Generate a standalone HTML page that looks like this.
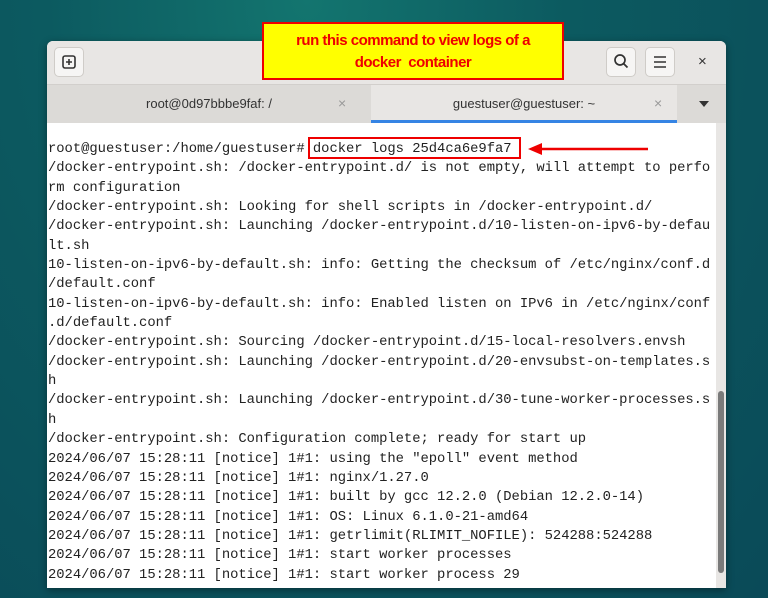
<!DOCTYPE html>
<html><head><style>
body{margin:0;width:768px;height:598px;overflow:hidden;background:radial-gradient(ellipse at 40% 0%,#13756f 0%,#0c5a60 40%,#0a4a58 100%);font-family:"Liberation Sans",sans-serif;position:relative}
.win{position:absolute;left:47px;top:41px;width:679px;height:547px;background:#fff;border-radius:6px 6px 0 0;overflow:hidden;box-shadow:0 2px 8px rgba(0,0,0,.4)}
.hdr{height:43px;background:#e8e6e4;border-bottom:1px solid #d2cfcc;position:relative}
.btn{position:absolute;top:6px;width:30px;height:30px;border:1px solid #cfccc8;border-radius:5px;background:#f6f5f4;box-sizing:border-box}
.tabs{height:38px;background:#dcdad7;position:relative;font-size:13px;color:#333}
.tab{position:absolute;top:0;height:38px;line-height:38px;text-align:center}
.x{position:absolute;top:0;color:#999;font-size:14px}
.term{position:absolute;top:84px;left:1px;width:669px;font-family:"Liberation Mono",monospace;font-size:13.85px;line-height:19.35px;color:#222;white-space:pre;padding-top:15px;letter-spacing:-0.03px}
.sb{position:absolute;right:0;top:82px;width:10px;bottom:0;background:#e8e6e4}
.th{position:absolute;left:2px;width:6px;top:268px;height:182px;background:#7a7a7a;border-radius:3px}
.note{position:absolute;left:262px;top:22px;width:302px;height:58px;background:#ffff00;border:2px solid #e00;box-sizing:border-box;color:#e00;font-weight:bold;font-size:15px;text-align:center;line-height:22px;padding-top:6px;letter-spacing:-.5px}
.box{position:absolute;left:308px;top:137px;width:213px;height:22px;border:2px solid #e00;box-sizing:border-box}
</style></head><body>
<div class="win">
<div class="hdr">
<div class="btn" style="left:7px"><svg width="28" height="28" viewBox="0 0 28 28"><rect x="8" y="8" width="12" height="12" rx="2" fill="none" stroke="#333" stroke-width="1.6"/><path d="M14 11v6M11 14h6" stroke="#333" stroke-width="1.6"/></svg></div>
<div class="btn" style="left:559px"><svg width="28" height="28" viewBox="0 0 28 28"><circle cx="13" cy="12" r="5" fill="none" stroke="#333" stroke-width="1.7"/><path d="M16.5 15.5l4 4" stroke="#333" stroke-width="1.8"/></svg></div>
<div class="btn" style="left:598px"><svg width="28" height="28" viewBox="0 0 28 28"><path d="M8 9h12M8 14h12M8 19h12" stroke="#333" stroke-width="1.6"/></svg></div>
<div style="position:absolute;left:651px;top:12px;font-size:15px;color:#333">×</div>
</div>
<div class="tabs">
<div class="tab" style="left:0;width:324px">root@0d97bbbe9faf: /</div><div class="x" style="left:291px;top:10px">×</div>
<div class="tab" style="left:324px;width:306px;background:#e8e6e4;border-bottom:3px solid #3584e4;box-sizing:border-box">guestuser@guestuser: ~</div><div class="x" style="left:607px;top:10px">×</div>
<div style="position:absolute;left:652px;top:16px;border:5px solid transparent;border-top:6px solid #333;border-bottom:0"></div>
</div>
<div class="term">root@guestuser:/home/guestuser# docker logs 25d4ca6e9fa7
/docker-entrypoint.sh: /docker-entrypoint.d/ is not empty, will attempt to perfo
rm configuration
/docker-entrypoint.sh: Looking for shell scripts in /docker-entrypoint.d/
/docker-entrypoint.sh: Launching /docker-entrypoint.d/10-listen-on-ipv6-by-defau
lt.sh
10-listen-on-ipv6-by-default.sh: info: Getting the checksum of /etc/nginx/conf.d
/default.conf
10-listen-on-ipv6-by-default.sh: info: Enabled listen on IPv6 in /etc/nginx/conf
.d/default.conf
/docker-entrypoint.sh: Sourcing /docker-entrypoint.d/15-local-resolvers.envsh
/docker-entrypoint.sh: Launching /docker-entrypoint.d/20-envsubst-on-templates.s
h
/docker-entrypoint.sh: Launching /docker-entrypoint.d/30-tune-worker-processes.s
h
/docker-entrypoint.sh: Configuration complete; ready for start up
2024/06/07 15:28:11 [notice] 1#1: using the "epoll" event method
2024/06/07 15:28:11 [notice] 1#1: nginx/1.27.0
2024/06/07 15:28:11 [notice] 1#1: built by gcc 12.2.0 (Debian 12.2.0-14)
2024/06/07 15:28:11 [notice] 1#1: OS: Linux 6.1.0-21-amd64
2024/06/07 15:28:11 [notice] 1#1: getrlimit(RLIMIT_NOFILE): 524288:524288
2024/06/07 15:28:11 [notice] 1#1: start worker processes
2024/06/07 15:28:11 [notice] 1#1: start worker process 29</div>
<div class="sb"><div class="th"></div></div>
</div>
<div class="note">run this command to view logs of a<br>docker &nbsp;container</div>
<div class="box"></div>
<svg style="position:absolute;left:526px;top:141px" width="124" height="16"><path d="M14 8H122" stroke="#e00" stroke-width="2.5"/><path d="M2 8L16 2V14Z" fill="#e00"/></svg>
</body></html>
